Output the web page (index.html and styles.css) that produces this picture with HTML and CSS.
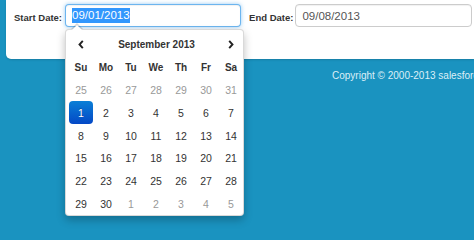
FILE: index.html
```html
<!DOCTYPE html>
<html>
<head>
<meta charset="utf-8">
<link rel="stylesheet" href="styles.css">
</head>
<body>
<div class="panel">
  <div class="form-row">
    <label class="lbl">Start Date:</label>
    <div class="field field-start is-focus"><span class="sel">09/01/2013</span></div>
    <label class="lbl lbl-end">End Date:</label>
    <div class="field field-end">09/08/2013</div>
  </div>
</div>
<footer class="footer">Copyright © 2000-2013 salesforce.com</footer>

<div class="datepicker">
  <div class="dp-grid">
    <div class="nav"><svg width="6" height="9" viewBox="0 0 6 9"><path d="M4.8 0.8 L1.5 4.5 L4.8 8.2" fill="none" stroke="#222" stroke-width="1.9"/></svg></div>
    <div class="title">September 2013</div>
    <div class="nav"><svg width="6" height="9" viewBox="0 0 6 9"><path d="M1.2 0.8 L4.5 4.5 L1.2 8.2" fill="none" stroke="#222" stroke-width="1.9"/></svg></div>

    <div class="dow">Su</div><div class="dow">Mo</div><div class="dow">Tu</div><div class="dow">We</div><div class="dow">Th</div><div class="dow">Fr</div><div class="dow">Sa</div>

    <div class="day old">25</div><div class="day old">26</div><div class="day old">27</div><div class="day old">28</div><div class="day old">29</div><div class="day old">30</div><div class="day old">31</div>
    <div class="day active">1</div><div class="day">2</div><div class="day">3</div><div class="day">4</div><div class="day">5</div><div class="day">6</div><div class="day">7</div>
    <div class="day">8</div><div class="day">9</div><div class="day">10</div><div class="day">11</div><div class="day">12</div><div class="day">13</div><div class="day">14</div>
    <div class="day">15</div><div class="day">16</div><div class="day">17</div><div class="day">18</div><div class="day">19</div><div class="day">20</div><div class="day">21</div>
    <div class="day">22</div><div class="day">23</div><div class="day">24</div><div class="day">25</div><div class="day">26</div><div class="day">27</div><div class="day">28</div>
    <div class="day">29</div><div class="day">30</div><div class="day new">1</div><div class="day new">2</div><div class="day new">3</div><div class="day new">4</div><div class="day new">5</div>
  </div>
</div>
</body>
</html>
```

FILE: styles.css
```css
html, body {
  margin: 0;
  padding: 0;
}
body {
  position: relative;
  width: 474px;
  height: 233px;
  overflow: hidden;
  background: #1a93c0;
  font-family: "Liberation Sans", Arial, sans-serif;
  color: #333;
}
.panel {
  margin-left: 6px;
  height: 59px;
  box-sizing: border-box;
  padding: 4px 0 0 8px;
  background: #fff;
  border-bottom-left-radius: 5px;
  box-shadow: 0 1px 2px rgba(0, 0, 0, 0.15);
}
.form-row {
  display: flex;
  align-items: center;
  height: 23px;
}
.lbl {
  font-size: 9.5px;
  font-weight: bold;
  color: #333;
  margin-right: 3px;
  padding-top: 3px;
}
.lbl-end {
  margin-left: 8px;
  margin-right: 2px;
}
.field {
  height: 23px;
  box-sizing: border-box;
  border: 1px solid #ccc;
  border-radius: 4px;
  padding: 0 6px;
  display: flex;
  align-items: center;
  font-size: 11.5px;
  color: #555;
  background: #fff;
  box-shadow: inset 0 1px 1px rgba(0, 0, 0, 0.06);
}
.field-start {
  width: 176px;
}
.field-end {
  width: 177px;
}
.is-focus {
  border-color: rgba(82, 168, 236, 0.85);
  box-shadow: inset 0 1px 1px rgba(0, 0, 0, 0.06), 0 0 4px rgba(82, 168, 236, 0.6);
}
.sel {
  background: #3297fd;
  color: #fff;
  line-height: 15px;
}
.footer {
  margin-top: 11px;
  padding-left: 332px;
  font-size: 10px;
  line-height: 12px;
  color: #dcefF7;
  white-space: nowrap;
}
.datepicker {
  position: absolute;
  left: 65px;
  top: 29px;
  width: 179px;
  height: 187px;
  box-sizing: border-box;
  padding: 3px 0 0 3px;
  background: #fff;
  border: 1px solid rgba(0, 0, 0, 0.15);
  border-radius: 4px;
  box-shadow: 0 4px 8px rgba(0, 0, 0, 0.25);
}
.datepicker::before {
  content: "";
  position: absolute;
  top: -7px;
  left: 5px;
  border-left: 6px solid transparent;
  border-right: 6px solid transparent;
  border-bottom: 6px solid rgba(0, 0, 0, 0.15);
}
.datepicker::after {
  content: "";
  position: absolute;
  top: -5px;
  left: 6px;
  border-left: 5px solid transparent;
  border-right: 5px solid transparent;
  border-bottom: 5px solid #fff;
}
.dp-grid {
  display: grid;
  grid-template-columns: repeat(7, 25px);
  grid-auto-rows: 22.8px;
}
.nav, .title, .dow, .day {
  display: flex;
  align-items: center;
  justify-content: center;
}
.nav {
  padding-right: 2px;
}
.title {
  grid-column: span 5;
  font-size: 10px;
  font-weight: bold;
  color: #333;
}
.dow {
  font-size: 10px;
  font-weight: bold;
  color: #333;
  padding-right: 1px;
}
.day {
  font-size: 10.5px;
  color: #333;
  padding-right: 1px;
}
.day.old, .day.new {
  color: #999;
}
.day.active {
  width: 24px;
  padding-right: 0;
  color: #fff;
  border-radius: 4px;
  background: linear-gradient(#0a7fd6, #0448c6);
  text-shadow: 0 -1px 0 rgba(0, 0, 0, 0.25);
}
```
